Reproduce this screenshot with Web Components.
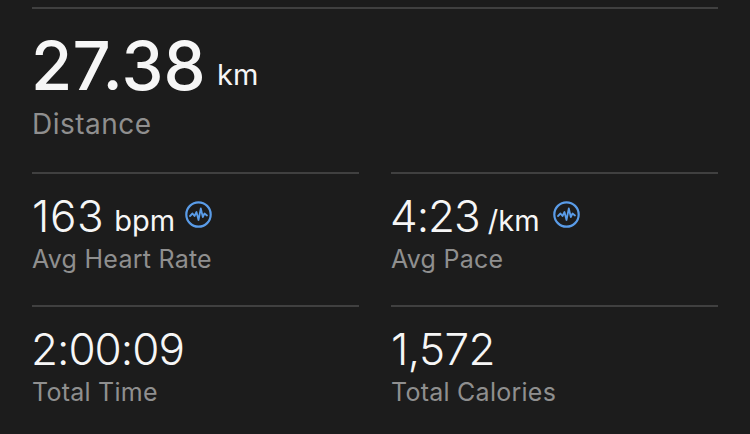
<!DOCTYPE html>
<html>
<head>
<meta charset="utf-8">
<style>
	html, body {
		margin: 0;
		height: 434px;
		overflow: hidden;
		background: #1c1c1c;
	}
	body {
		font-family: Inter, "Liberation Sans", sans-serif;
	}
</style>
</head>
<body>
<stats-panel>
	<stat-cell class="wide" big style="--ml:-1px; --gap:11px" value="27.38" unit="km" label="Distance"></stat-cell>
	<stat-cell style="--ls:.6px" value="163" unit="bpm" label="Avg Heart Rate" live></stat-cell>
	<stat-cell style="--ls:-1px; --ml:-1px; --gap:8px; --icon-gap:13px" value="4:23" unit="/km" label="Avg Pace" live></stat-cell>
	<stat-cell style="--ls:-1px; --ml:-1px" value="2:00:09" label="Total Time"></stat-cell>
	<stat-cell style="--ls:-.6px" value="1,572" label="Total Calories"></stat-cell>
</stats-panel>

<script>
class StatsPanel extends HTMLElement {
	constructor() {
		super()
		this.attachShadow({mode:'open'})
		this.shadowRoot.innerHTML = /*html*/`
		<style>
			:host {
				display: grid;
				grid-template-columns: 327px 327px;
				grid-template-rows: 165px 133px 128px;
				column-gap: 32px;
				padding: 7px 32px 0;
			}
			::slotted(.wide) {
				grid-column: 1 / 3;
			}
		</style>
		<slot></slot>`
	}
}

class StatCell extends HTMLElement {
	constructor() {
		super()
		this.attachShadow({mode:'open'})
		let unit = this.getAttribute('unit')
		this.shadowRoot.innerHTML = /*html*/`
		<style>
			:host {
				display: block;
				border-top: solid 2px #404040;
				padding-top: 20px;
			}
			.top {
				display: flex;
				align-items: flex-start;
				height: 50px;
				line-height: 45px;
				color: #f6f6f6;
				white-space: nowrap;
			}
			:host([big]) .top {
				height: 82px;
				line-height: 73px;
			}
			.value {
				font-size: 44px;
				font-weight: 300;
				letter-spacing: var(--ls, 0);
				margin-left: var(--ml, 0);
			}
			:host([big]) .value {
				font-size: 67px;
				font-weight: 500;
				letter-spacing: .2px;
			}
			.unit {
				font-size: 29px;
				font-weight: 400;
				margin-left: var(--gap, 10px);
				line-height: 54px;
			}
			:host([big]) .unit {
				line-height: 91px;
			}
			svg {
				width: 27px;
				height: 27px;
				margin: 7px 0 0 var(--icon-gap, 10px);
				flex: none;
			}
			.label {
				font-size: 25px;
				font-weight: 400;
				line-height: 30px;
				color: #8f8f8f;
				letter-spacing: .25px;
			}
			:host([big]) .label {
				font-size: 28px;
				letter-spacing: .5px;
				margin-top: -2px;
			}
		</style>
		<div class="top">
			<span class="value">${this.getAttribute('value')}</span>
			${unit ? `<span class="unit">${unit}</span>` : ''}
			${this.hasAttribute('live') ? `<svg viewBox="0 0 27 27" fill="none" stroke="#5a9ce8">
				<circle cx="13.5" cy="13.5" r="12.2" stroke-width="2.2"/>
				<path d="M5 15 L7.5 12.5 L9.5 15 L11.5 11 L13.5 19 L15.8 7.5 L17.8 16 L19.5 12.5 L22 14.5" stroke-width="1.8" stroke-linejoin="round" stroke-linecap="round"/>
			</svg>` : ''}
		</div>
		<div class="label">${this.getAttribute('label')}</div>`
	}
}

customElements.define('stats-panel', StatsPanel)
customElements.define('stat-cell', StatCell)
</script>
</body>
</html>
